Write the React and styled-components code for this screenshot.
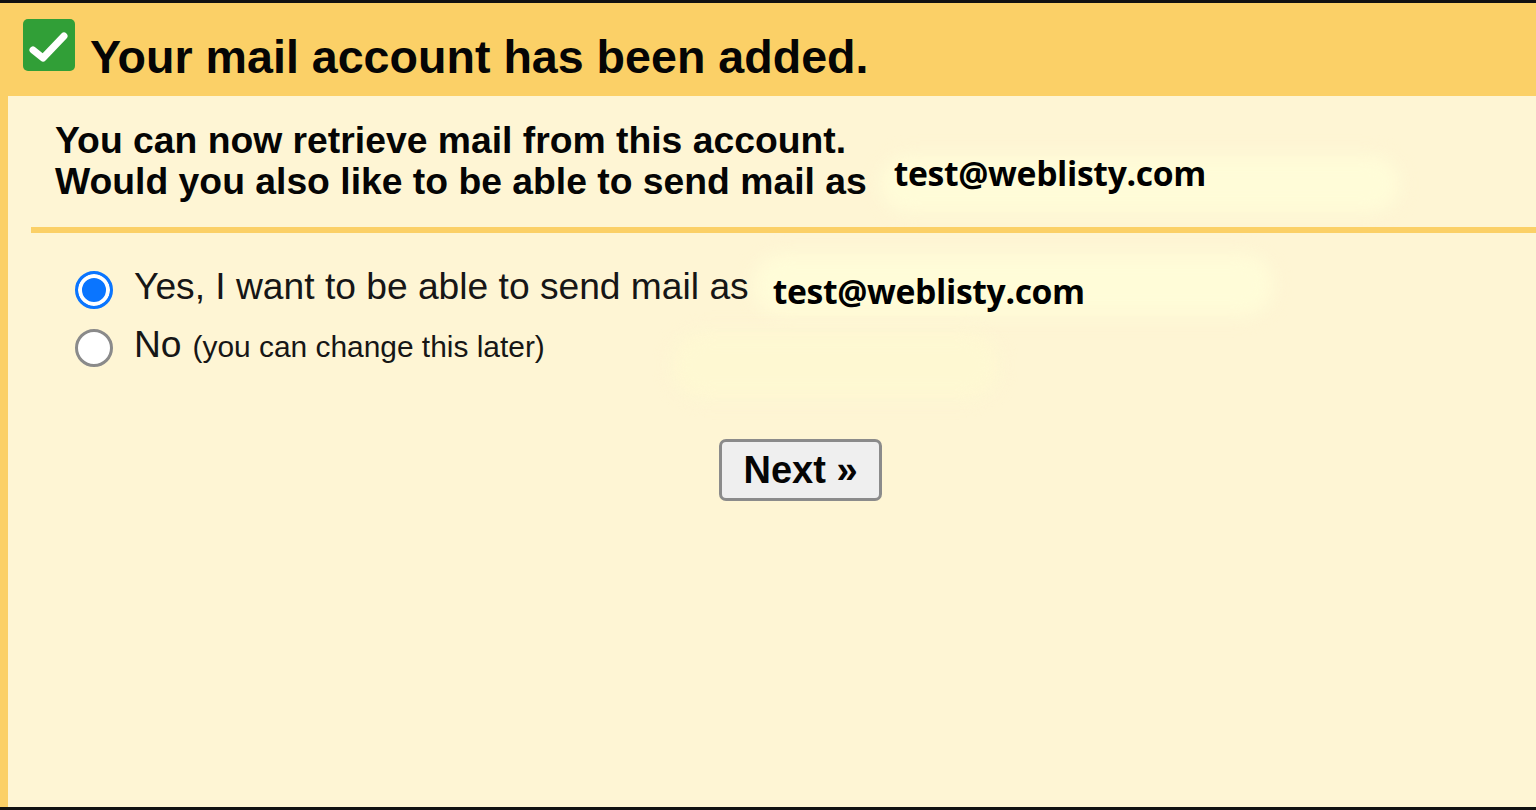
import React from "react";
import styled, { createGlobalStyle } from "styled-components";

const GlobalStyle = createGlobalStyle`
  html, body {
    margin: 0;
    padding: 0;
    background: #fef5d4;
  }
  * {
    box-sizing: border-box;
  }
`;

const Frame = styled.div`
  width: 1536px;
  height: 810px;
  display: flex;
  flex-direction: column;
  overflow: hidden;
  border-top: 3px solid #111;
  border-bottom: 3px solid #111;
  background: #fbd067;
  font-family: "Liberation Sans", Arial, sans-serif;
  color: #050505;
`;

const Header = styled.div`
  height: 93px;
  flex-shrink: 0;
  display: flex;
  align-items: flex-start;
  gap: 14px;
  padding: 15px 0 0 22px;
`;

const Title = styled.h1`
  margin: 13px 0 0;
  font-size: 46.6px;
  line-height: 52px;
  font-weight: 700;
  white-space: nowrap;
`;

const CheckIcon = styled.svg`
  width: 54px;
  height: 54px;
  flex-shrink: 0;
`;

const Panel = styled.div`
  position: relative;
  flex: 1;
  margin-left: 8px;
  background: #fef5d4;
  padding-top: 24px;
`;

const Patch = styled.div`
  position: absolute;
  left: ${(p) => p.$left}px;
  top: ${(p) => p.$top}px;
  width: ${(p) => p.$width}px;
  height: ${(p) => p.$height}px;
  background: ${(p) => p.$color};
  border-radius: 30px;
  filter: blur(9px);
`;

const Intro = styled.div`
  position: relative;
  margin-left: 47px;
  font-size: 37.3px;
  line-height: 41px;
  font-weight: 700;
`;

const IntroLine = styled.div`
  display: flex;
  align-items: baseline;
  white-space: nowrap;
`;

const Email = styled.span`
  margin-left: ${(p) => p.$gap}px;
  position: relative;
  top: ${(p) => p.$lift}px;
  font-family: "Open Sans", sans-serif;
  font-size: 33.7px;
  font-weight: 700;
  letter-spacing: -0.35px;
  color: #000;
`;

const Divider = styled.div`
  position: relative;
  height: 6px;
  margin: 25px 0 0 23px;
  background: #fbd067;
`;

const Options = styled.div`
  position: relative;
  margin: 38px 0 0 67px;
  display: flex;
  flex-direction: column;
  gap: 20px;
`;

const Option = styled.label`
  display: flex;
  align-items: center;
  height: 38px;
  gap: 21px;
  font-size: 37.2px;
  white-space: nowrap;
  color: #161616;
`;

const Radio = styled.span`
  width: 38px;
  height: 38px;
  flex-shrink: 0;
  border-radius: 50%;
  background: ${(p) => (p.$checked ? "#0a75ff" : "#fff")};
  border: ${(p) => (p.$checked ? "3px solid #0a75ff" : "3px solid #8a8a8a")};
  box-shadow: ${(p) => (p.$checked ? "inset 0 0 0 4px #fff" : "none")};
`;

const OptionText = styled.span`
  display: flex;
  align-items: baseline;
  margin-top: ${(p) => p.$shift}px;
`;

const Hint = styled.span`
  margin-left: 11px;
  font-size: 29.9px;
`;

const ButtonRow = styled.div`
  position: relative;
  display: flex;
  margin: 72px 0 0 711px;
`;

const NextButton = styled.button`
  width: 163px;
  height: 62px;
  padding: 0;
  border: 3px solid #8b8b8b;
  border-radius: 7px;
  background: #efefef;
  font-family: inherit;
  font-size: 38px;
  font-weight: 700;
  color: #050505;
`;

export default function App() {
  return (
    <>
      <GlobalStyle />
      <Frame>
        <Header>
          <CheckIcon viewBox="0 0 54 54">
            <rect x="1" y="1" width="52" height="52" rx="5" fill="#319f37" />
            <path
              d="M11 32 L21 40 L42 18"
              fill="none"
              stroke="#fff"
              strokeWidth="7"
              strokeLinecap="round"
              strokeLinejoin="round"
            />
          </CheckIcon>
          <Title>Your mail account has been added.</Title>
        </Header>
        <Panel>
          <Patch $left={872} $top={60} $width={520} $height={56} $color="#fffcd8" />
          <Patch $left={745} $top={158} $width={520} $height={62} $color="#fffcd8" />
          <Patch $left={665} $top={236} $width={325} $height={66} $color="#fef8d2" />
          <Intro>
            <IntroLine>You can now retrieve mail from this account.</IntroLine>
            <IntroLine>
              Would you also like to be able to send mail as
              <Email $gap={27} $lift={-8}>test@weblisty.com</Email>
            </IntroLine>
          </Intro>
          <Divider />
          <Options>
            <Option>
              <Radio $checked />
              <OptionText $shift={-8}>
                Yes, I want to be able to send mail as
                <Email $gap={24} $lift={5}>test@weblisty.com</Email>
              </OptionText>
            </Option>
            <Option>
              <Radio />
              <OptionText $shift={-8}>
                No<Hint>(you can change this later)</Hint>
              </OptionText>
            </Option>
          </Options>
          <ButtonRow>
            <NextButton>Next »</NextButton>
          </ButtonRow>
        </Panel>
      </Frame>
    </>
  );
}
